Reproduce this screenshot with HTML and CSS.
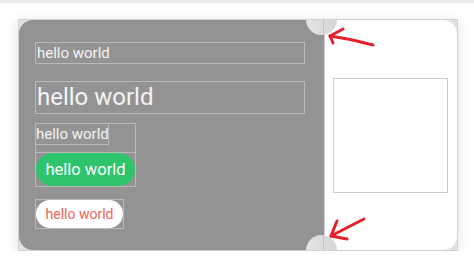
FILE: index.html
```html
<!DOCTYPE html>
<html lang="en">
<head>
    <meta charset="UTF-8">
    <title>ticket layout</title>
    <link rel="stylesheet" href="styles.css">
</head>
<body>

<div class="topbar"></div>

<div class="stage">
    <div class="card">
        <!-- 왼쪽 회색 영역 -->
        <div class="left">
            <div class="line small">hello world</div>
            <div class="line big">hello world</div>
            <div class="group">
                <div class="tag">hello world</div>
                <div class="pill-wrap">
                    <div class="pill green">hello world</div>
                </div>
            </div>
            <div class="pill-wrap light">
                <div class="pill white">hello world</div>
            </div>
        </div>

        <!-- 오른쪽 흰색 영역 -->
        <div class="right">
            <div class="photo"></div>
        </div>

        <div class="notch top"></div>
        <div class="notch bottom"></div>
    </div>
</div>

<!-- 빨간 화살표 표시 -->
<svg class="marks" viewBox="0 0 474 268">
    <g fill="none" stroke="#e5202b" stroke-width="3" stroke-linecap="round" stroke-linejoin="round">
        <path d="M373 45 Q352 39 330 36"/>
        <path d="M343 29 L330 36 L333 43"/>
        <path d="M364 219 Q348 227 331 236"/>
        <path d="M337 221 L331 236 L347 239"/>
    </g>
</svg>

</body>
</html>
```

FILE: styles.css
```css
body {
    margin: 0;
    font-family: Roboto, 'Noto Sans', sans-serif;
    background-color: #ffffff;
}

.topbar {
    height: 3px;
    background-color: #ececec;
}

.stage {
    padding: 16px 0 0 18px;
}

.card {
    position: relative;
    display: flex;
    width: 440px;
    height: 232px;
    box-sizing: border-box;
    border: 1px solid #d2d2d2;
    background-color: #e2e2e2;
    box-shadow: 0 3px 12px rgba(0, 0, 0, 0.12);
    overflow: hidden;
}

.left {
    width: 305px;
    flex-shrink: 0;
    box-sizing: border-box;
    padding: 22px 0 0 16px;
    background-color: #939393;
    border-radius: 14px 0 0 14px;
    color: #f4f4f4;
    display: flex;
    flex-direction: column;
    align-items: flex-start;
}

.line {
    width: 270px;
    box-sizing: border-box;
    border: 1px solid #b9b9b9;
    padding-left: 1px;
    white-space: nowrap;
}

.line.small {
    font-size: 15px;
    line-height: 20px;
}

.line.big {
    margin-top: 17px;
    font-size: 24px;
    line-height: 31px;
}

.group {
    margin-top: 9px;
    display: flex;
    flex-direction: column;
    align-items: flex-start;
    outline: 1px solid #b9b9b9;
    outline-offset: -1px;
}

.tag {
    width: 74px;
    box-sizing: border-box;
    border: 1px solid #b9b9b9;
    font-size: 15px;
    line-height: 20px;
    white-space: nowrap;
    overflow: hidden;
}

.pill-wrap {
    margin-top: 7px;
    border: 1px solid #b9b9b9;
}

.pill-wrap.light {
    margin-top: 12px;
}

.pill {
    border-radius: 999px;
    white-space: nowrap;
    text-align: center;
}

.pill.green {
    width: 99px;
    height: 33px;
    line-height: 33px;
    font-size: 16.5px;
    background-color: #2ec46b;
    color: #ffffff;
}

.pill.white {
    width: 87px;
    height: 28px;
    line-height: 28px;
    font-size: 14px;
    background-color: #ffffff;
    color: #f0645a;
}

.right {
    flex: 1;
    border-left: 1px solid #cfcfcf;
    background-color: #ffffff;
    border-radius: 0 14px 14px 0;
    padding: 58px 0 0 8px;
}

.photo {
    width: 115px;
    height: 115px;
    box-sizing: border-box;
    border: 1px solid #cccccc;
}

.notch {
    position: absolute;
    left: 287px;
    width: 31px;
    height: 31px;
    border-radius: 50%;
    background: linear-gradient(to right, #e4e4e4, #d6d6d6);
}

.notch::after {
    content: "";
    position: absolute;
    left: 17px;
    top: 0;
    bottom: 0;
    width: 1px;
    background-color: #c4c4c4;
}

.notch.top {
    top: -16px;
}

.notch.bottom {
    bottom: -16px;
}

.marks {
    position: absolute;
    left: 0;
    top: 0;
    width: 474px;
    height: 268px;
    pointer-events: none;
}
```
